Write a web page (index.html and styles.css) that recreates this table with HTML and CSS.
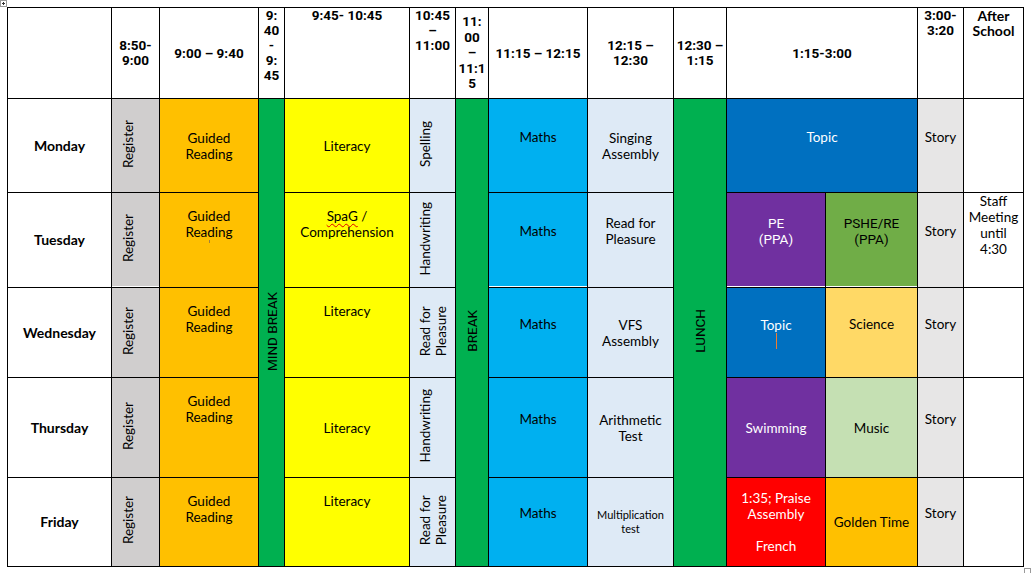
FILE: index.html
```html
<!DOCTYPE html>
<html lang="en">
<head>
<meta charset="utf-8">
<title>Class Timetable</title>
<link rel="stylesheet" href="styles.css">
</head>
<body>
<div class="page">
  <span class="move-handle"><span class="mh-v"></span><span class="mh-h"></span></span>
  <table class="timetable">
    <colgroup>
      <col class="w-day"><col class="w-reg"><col class="w-gr"><col class="w-mind"><col class="w-lit"><col class="w-pale"><col class="w-brk"><col class="w-maths"><col class="w-assm"><col class="w-lunch"><col class="w-pm1"><col class="w-pm2"><col class="w-story"><col class="w-after">
    </colgroup>
    <tr class="h-head">
      <th></th>
      <th>8:50-<br>9:00</th>
      <th>9:00 – 9:40</th>
      <th class="top">9:<br>40<br>-<br>9:<br>45</th>
      <th class="top">9:45- 10:45</th>
      <th class="top">10:45<br>–<br>11:00</th>
      <th class="tall">11:<br>00<br>–<br>11:1<br>5</th>
      <th>11:15 – 12:15</th>
      <th>12:15 –<br>12:30</th>
      <th>12:30 –<br>1:15</th>
      <th colspan="2">1:15-3:00</th>
      <th class="top">3:00-<br>3:20</th>
      <th class="top script-head">After<br>School</th>
    </tr>
    <tr class="h-mon">
      <td class="day">Monday</td>
      <td class="reg shift"><span class="rot">Register</span></td>
      <td class="orange">Guided<br>Reading</td>
      <td class="green sans" rowspan="5"><span class="rot">MIND BREAK</span></td>
      <td class="yellow">Literacy</td>
      <td class="pale shift"><span class="rot">Spelling</span></td>
      <td class="green sans" rowspan="5"><span class="rot">BREAK</span></td>
      <td class="cyan lift">Maths</td>
      <td class="pale">Singing<br>Assembly</td>
      <td class="green sans" rowspan="5"><span class="rot">LUNCH</span></td>
      <td class="blue lift" colspan="2">Topic</td>
      <td class="story lift">Story</td>
      <td></td>
    </tr>
    <tr class="h-tue">
      <td class="day">Tuesday</td>
      <td class="reg shift seam"><span class="rot">Register</span></td>
      <td class="orange drop">Guided<br>Reading<br><span class="mark"></span></td>
      <td class="yellow drop"><span class="squiggle">SpaG</span> /<br>Comprehension</td>
      <td class="pale shift"><span class="rot">Handwriting</span></td>
      <td class="cyan lift seam">Maths</td>
      <td class="pale lift">Read for<br>Pleasure</td>
      <td class="purple sans lift seam">PE<br>(PPA)</td>
      <td class="leaf sans lift seam">PSHE/RE<br>(PPA)</td>
      <td class="story lift">Story</td>
      <td class="flush">Staff<br>Meeting<br>until<br>4:30</td>
    </tr>
    <tr class="h-wed">
      <td class="day">Wednesday</td>
      <td class="reg shift"><span class="rot">Register</span></td>
      <td class="orange drop">Guided<br>Reading</td>
      <td class="yellow drop">Literacy</td>
      <td class="pale"><span class="rot">Read for<br>Pleasure</span></td>
      <td class="cyan lift">Maths</td>
      <td class="pale">VFS<br>Assembly</td>
      <td class="blue">Topic<br><span class="caret"></span></td>
      <td class="gold lift">Science</td>
      <td class="story lift">Story</td>
      <td></td>
    </tr>
    <tr class="h-thu">
      <td class="day">Thursday</td>
      <td class="reg shift"><span class="rot">Register</span></td>
      <td class="orange drop">Guided<br>Reading</td>
      <td class="yellow">Literacy</td>
      <td class="pale shift"><span class="rot">Handwriting</span></td>
      <td class="cyan lift">Maths</td>
      <td class="pale">Arithmetic<br>Test</td>
      <td class="purple">Swimming</td>
      <td class="mint">Music</td>
      <td class="story lift">Story</td>
      <td></td>
    </tr>
    <tr class="h-fri">
      <td class="day">Friday</td>
      <td class="reg shift"><span class="rot">Register</span></td>
      <td class="orange drop">Guided<br>Reading</td>
      <td class="yellow drop">Literacy</td>
      <td class="pale"><span class="rot">Read for<br>Pleasure</span></td>
      <td class="cyan lift">Maths</td>
      <td class="pale small">Multiplication<br>test</td>
      <td class="red">1:35; Praise<br>Assembly<br><br>French</td>
      <td class="orange">Golden Time</td>
      <td class="story lift">Story</td>
      <td></td>
    </tr>
  </table>
  <span class="resize-handle"></span>
</div>
</body>
</html>
```

FILE: styles.css
```css
* { box-sizing: border-box; }

body {
  margin: 0;
  background: #ffffff;
}

.page {
  position: relative;
  width: 1034px;
  height: 573px;
  padding: 7px 0 0 7px;
  overflow: hidden;
}

.timetable {
  border-collapse: collapse;
  table-layout: fixed;
  width: 1017px;
  font-family: Lato, "Noto Sans", sans-serif;
  font-size: 13.5px;
  line-height: 16px;
  color: #000;
}

.timetable th,
.timetable td {
  border: 1px solid #000;
  padding: 0 3px;
  text-align: center;
  vertical-align: middle;
  overflow: hidden;
}

.timetable th {
  font-family: Roboto, "Noto Sans", sans-serif;
  font-weight: 700;
  font-size: 13.5px;
  line-height: 15px;
  padding: 0 1px;
  white-space: nowrap;
}

.timetable th.top { vertical-align: top; }
.timetable th.tall { line-height: 15.5px; }
.timetable th.script-head {
  font-family: Lato, "Noto Sans", sans-serif;
  font-size: 14px;
}

/* column widths */
.w-day { width: 104px; }
.w-reg { width: 48px; }
.w-gr { width: 99px; }
.w-mind { width: 26px; }
.w-lit { width: 125px; }
.w-pale { width: 46px; }
.w-brk { width: 33px; }
.w-maths { width: 99px; }
.w-assm { width: 86px; }
.w-lunch { width: 53px; }
.w-pm1 { width: 99px; }
.w-pm2 { width: 92px; }
.w-story { width: 46px; }
.w-after { width: 60px; }

/* row heights */
.h-head { height: 91px; }
.h-mon { height: 94px; }
.h-tue { height: 95px; }
.h-wed { height: 90px; }
.h-thu { height: 100px; }
.h-fri { height: 89px; }

.day {
  font-weight: 700;
  font-size: 14px;
}

.sans {
  font-family: Roboto, "Noto Sans", sans-serif;
  font-size: 13.5px;
}

.small { font-size: 11px; line-height: 14px; }

/* fills */
.reg { background: #d0cece; }
.orange { background: #ffc000; }
.green { background: #00b050; }
.yellow { background: #ffff00; }
.pale { background: #deeaf6; }
.cyan { background: #00b0f0; }
.blue { background: #0070c0; color: #fff; }
.purple { background: #7030a0; color: #fff; }
.leaf { background: #70ad47; }
.gold { background: #ffd966; }
.mint { background: #c5e0b3; }
.red { background: #ff0000; color: #fff; }
.story { background: #e7e6e6; }

/* vertical placement of content, as in the source document */
.timetable td.lift { padding-bottom: 18px; }
.timetable td.drop { vertical-align: top; padding-top: 15px; }
.timetable td.flush { vertical-align: top; padding-top: 0; }
.timetable td.shift { padding-right: 19px; }

.seam { box-shadow: inset 0 -1px 0 #fff; }

.rot {
  display: inline-block;
  writing-mode: vertical-rl;
  transform: rotate(180deg);
  white-space: nowrap;
}

.squiggle {
  text-decoration: underline wavy #e00000;
  text-decoration-thickness: 1px;
  text-underline-offset: 2px;
}

.caret {
  display: inline-block;
  width: 1px;
  height: 16px;
  background: #ed7d31;
  vertical-align: top;
}

.mark {
  display: inline-block;
  width: 1px;
  height: 3px;
  background: #a08040;
  vertical-align: top;
}

/* Word table handles */
.move-handle {
  position: absolute;
  left: 0;
  top: 0;
  width: 7px;
  height: 7px;
  border: 1px solid #9a9a9a;
  background: #fff;
}
.mh-v {
  position: absolute;
  left: 2px;
  top: 1px;
  width: 1px;
  height: 3px;
  background: #333;
}
.mh-h {
  position: absolute;
  left: 1px;
  top: 2px;
  width: 3px;
  height: 1px;
  background: #333;
}

.resize-handle {
  position: absolute;
  left: 1024px;
  top: 568px;
  width: 7px;
  height: 7px;
  border: 1px solid #9a9a9a;
  background: #fff;
}
```
